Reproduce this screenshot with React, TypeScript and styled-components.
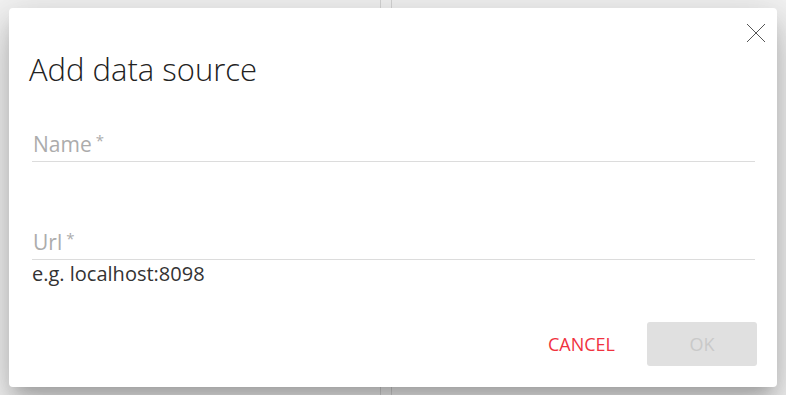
import React from 'react'
import styled, { createGlobalStyle } from 'styled-components'

const GlobalStyle = createGlobalStyle`
    html, body {
        margin: 0;
        padding: 0;
        width: 100%;
        height: 100%;
        overflow: hidden;
    }
    body {
        font-family: 'Open Sans', 'Noto Sans', sans-serif;
        background: #f4f4f4;
    }
`

const Page = styled.div`
    position: relative;
    width: 786px;
    height: 395px;
    display: flex;
    background: #f4f4f4;
`

const Column = styled.div<{ $width: number }>`
    width: ${(p) => p.$width}px;
    height: 100%;
    border-right: 1px solid #d6d6d6;
`

const Backdrop = styled.div`
    position: absolute;
    inset: 0;
    padding: 8px 9px 8px 9px;
    box-sizing: border-box;
`

const Dialog = styled.div`
    width: 768px;
    height: 379px;
    background: #fff;
    border-radius: 4px;
    box-shadow: 0 11px 15px -7px rgba(0, 0, 0, 0.2),
        0 24px 38px 3px rgba(0, 0, 0, 0.14), 0 9px 46px 8px rgba(0, 0, 0, 0.12);
    display: flex;
    flex-direction: column;
    box-sizing: border-box;
    padding: 0 20px 21px 23px;
`

const TopBar = styled.div`
    display: flex;
    justify-content: flex-end;
    height: 40px;
    padding-top: 15px;
    box-sizing: border-box;
    margin-right: -9px;
`

const CloseButton = styled.button`
    border: none;
    background: none;
    padding: 0;
    width: 20px;
    height: 20px;
    cursor: pointer;
`

const Title = styled.h1`
    margin: 0;
    font-family: 'Open Sans', sans-serif;
    font-weight: 300;
    font-size: 31px;
    line-height: 42px;
    color: #222;
    margin-left: -3px;
`

const Field = styled.div<{ $top: number }>`
    margin-top: ${(p) => p.$top}px;
    margin-right: 2px;
    display: flex;
    flex-direction: column;
`

const Input = styled.div`
    height: 35px;
    border-bottom: 1px solid #dcdcdc;
    display: flex;
    align-items: center;
    padding-left: 1px;
`

const Label = styled.span`
    font-size: 21px;
    font-weight: 400;
    color: #acacac;
    line-height: 26px;
`

const Star = styled.sup`
    font-size: 15px;
    margin-left: 4px;
    vertical-align: 6px;
    line-height: 0;
`

const Helper = styled.div`
    font-size: 20px;
    color: #333;
    line-height: 26px;
    margin-top: 1px;
`

const Actions = styled.div`
    margin-top: auto;
    display: flex;
    justify-content: flex-end;
    align-items: center;
    gap: 32px;
`

const TextButton = styled.button`
    border: none;
    background: none;
    font-family: 'Open Sans', sans-serif;
    font-size: 18px;
    color: #f0323f;
    padding: 0;
    cursor: pointer;
`

const OkButton = styled.button`
    width: 110px;
    height: 44px;
    border: none;
    border-radius: 3px;
    background: #e0e0e0;
    color: #c9c9c9;
    font-family: 'Open Sans', sans-serif;
    font-size: 18px;
`

const App = () => {
    return (
        <Page>
            <GlobalStyle />
            <Column $width={380} />
            <Column $width={10} />
            <Backdrop>
                <Dialog>
                    <TopBar>
                        <CloseButton aria-label="close">
                            <svg width="20" height="20" viewBox="0 0 20 20">
                                <path d="M1 1L19 19M19 1L1 19" stroke="#555" strokeWidth="1" fill="none" />
                            </svg>
                        </CloseButton>
                    </TopBar>
                    <Title>Add data source</Title>
                    <Field $top={36}>
                        <Input>
                            <Label>
                                Name<Star>*</Star>
                            </Label>
                        </Input>
                    </Field>
                    <Field $top={62}>
                        <Input>
                            <Label>
                                Url<Star>*</Star>
                            </Label>
                        </Input>
                        <Helper>e.g. localhost:8098</Helper>
                    </Field>
                    <Actions>
                        <TextButton>CANCEL</TextButton>
                        <OkButton disabled>OK</OkButton>
                    </Actions>
                </Dialog>
            </Backdrop>
        </Page>
    )
}

export default App
